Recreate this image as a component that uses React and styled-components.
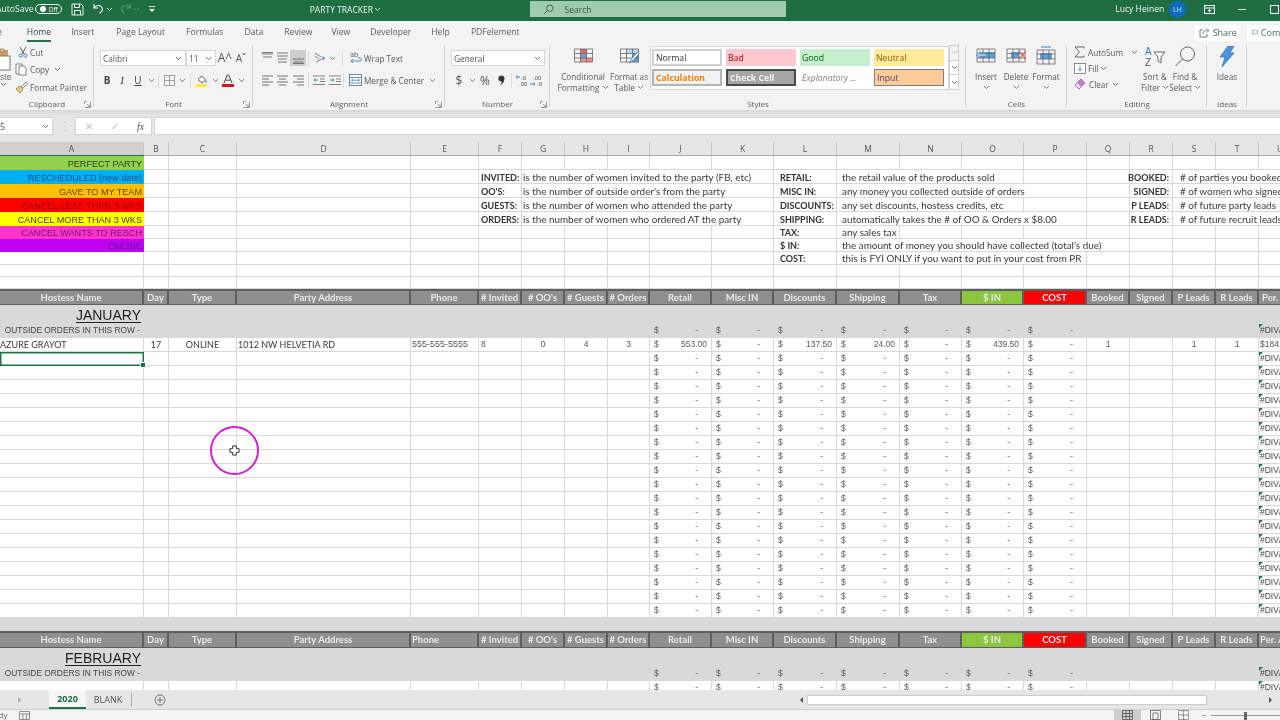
import React from 'react';
import styled, { createGlobalStyle } from 'styled-components';

const GlobalStyle = createGlobalStyle`
  html, body {
    margin: 0;
    padding: 0;
    height: 100%;
    background: #fff;
    overflow: hidden;
  }
  #root {
    height: 100%;
  }
`;

const UI_FONT = `'Open Sans', 'Noto Sans', sans-serif`;
const CELL_FONT = `Lato, 'Open Sans', sans-serif`;
const ARIAL = `'Liberation Sans', Arial, sans-serif`;

const COL_NAMES = 'ABCDEFGHIJKLMNOPQRSTU'.split('');
const COL_WIDTHS = [144, 25, 68, 174, 68, 43, 43, 43, 42, 62, 62, 63, 63, 62, 62, 63, 43, 43, 43, 43, 43];
const COL_TEMPLATE = COL_WIDTHS.map((w) => `${w}px`).join(' ');

/* ---------- icons ---------- */

const Chevron = ({ color = '#666' }) => (
  <svg width='7' height='5' viewBox='0 0 7 5'>
    <path d='M1 1l2.5 2.5L6 1' fill='none' stroke={color} strokeWidth='0.9' />
  </svg>
);

const SaveIcon = () => (
  <svg width='13' height='13' viewBox='0 0 13 13' fill='none' stroke='#e8f1ec' strokeWidth='1'>
    <path d='M1 1h9l2 2v9H1z' />
    <path d='M3.5 1v3.5h5V1M3.5 12V7.5h6V12' />
  </svg>
);

const UndoIcon = ({ color = '#fff' }) => (
  <svg width='13' height='12' viewBox='0 0 13 12' fill='none' stroke={color} strokeWidth='1.1'>
    <path d='M2 1v4h4' />
    <path d='M2 5c2-2.6 5-3 7-1.6 2.2 1.6 2 4.6-1.6 7' />
  </svg>
);

const RedoIcon = ({ color = '#5f9a7b' }) => (
  <svg width='13' height='12' viewBox='0 0 13 12' fill='none' stroke={color} strokeWidth='1.1'>
    <path d='M11 1v4H7' />
    <path d='M11 5C9 2.4 6 2 4 3.4c-2.2 1.6-2 4.6 1.6 7' />
  </svg>
);

const QuickAccessIcon = () => (
  <svg width='8' height='8' viewBox='0 0 8 8' fill='#eef5f0'>
    <rect x='1' y='1' width='6' height='1' />
    <path d='M1 4h6L4 7z' />
  </svg>
);

const SearchIcon = () => (
  <svg width='11' height='11' viewBox='0 0 11 11' fill='none' stroke='#33584a' strokeWidth='0.9'>
    <circle cx='6.8' cy='4.2' r='3.2' />
    <path d='M4.5 6.5L1 10' />
  </svg>
);

const RibbonModeIcon = () => (
  <svg width='11' height='9' viewBox='0 0 11 9' fill='none' stroke='#fff' strokeWidth='1'>
    <rect x='.5' y='.5' width='10' height='8' />
    <path d='M.5 3h10' />
    <path d='M5.5 4v3M4 5.5h3' />
  </svg>
);

const ShareIcon = () => (
  <svg width='11' height='11' viewBox='0 0 11 11' fill='none' stroke='#4e7b66' strokeWidth='0.9'>
    <path d='M4 3H1v7h7V7' />
    <path d='M4 7c0-2.5 2-3.6 4-3.6M7.5 1.5l2.5 2-2.5 2' />
  </svg>
);

const CommentIcon = () => (
  <svg width='11' height='11' viewBox='0 0 11 11' fill='none' stroke='#4e7b66' strokeWidth='0.9'>
    <path d='M1 1.5h9v6H4L2 9.5v-2H1z' />
  </svg>
);

const PasteIcon = () => (
  <svg width='13' height='24' viewBox='0 0 13 24' fill='none'>
    <path d='M-6 3h14v6H-6z' fill='#c9a063' />
    <rect x='-3' y='9' width='13' height='14' fill='#fff' stroke='#777' />
    <path d='M0 2h4v3H0z' fill='#e8c88e' stroke='#8a6d3b' strokeWidth='.6' />
  </svg>
);

const CutIcon = () => (
  <svg width='12' height='12' viewBox='0 0 12 12' fill='none' stroke='#555' strokeWidth='0.9'>
    <path d='M3 1l4 7M9 1L5 8' />
    <circle cx='3.6' cy='9.6' r='1.6' stroke='#3f77b5' />
    <circle cx='8.4' cy='9.6' r='1.6' stroke='#3f77b5' />
  </svg>
);

const CopyIcon = () => (
  <svg width='13' height='13' viewBox='0 0 13 13' fill='#fff' stroke='#666' strokeWidth='0.8'>
    <path d='M1 1h6v10H1z' />
    <path d='M4 3h5l2 2v7H4z' />
  </svg>
);

const PainterIcon = () => (
  <svg width='13' height='13' viewBox='0 0 13 13'>
    <path d='M6 6l5-5 1.5 1.5-5 5z' fill='#fff' stroke='#666' strokeWidth='0.8' />
    <path d='M1 8l4-3 3 3-3 4z' fill='#eccb7b' stroke='#8a6d3b' strokeWidth='0.7' />
  </svg>
);

const BordersIcon = () => (
  <svg width='11' height='11' viewBox='0 0 11 11' fill='none' stroke='#8d8d8d' strokeWidth='0.8'>
    <rect x='.5' y='.5' width='10' height='10' />
    <path d='M5.5 .5v10M.5 5.5h10' />
  </svg>
);

const FillIcon = () => (
  <svg width='12' height='13' viewBox='0 0 12 13'>
    <path d='M2 5.5L6 2l3.5 4-3.5 3z' fill='#fff' stroke='#555' strokeWidth='0.9' />
    <circle cx='10' cy='7.5' r='.9' fill='#3f77b5' />
    <rect y='10' width='11' height='3' fill='#ffef3a' />
  </svg>
);

const FontColorIcon = () => (
  <svg width='12' height='13' viewBox='0 0 12 13'>
    <path d='M2 9l3.2-8h1.4L10 9M3.4 6.2h5' fill='none' stroke='#444' strokeWidth='1' />
    <rect y='10' width='12' height='3' fill='#d6161c' />
  </svg>
);

const VAlignIcon = ({ pos }) => {
  const y = { top: [2, 5], middle: [4, 7], bottom: [7, 10] }[pos];
  return (
    <svg width='11' height='12' viewBox='0 0 11 12' stroke='#666' strokeWidth='0.9'>
      {pos === 'top' && <path d='M0 .5h11' />}
      {pos === 'bottom' && <path d='M0 11.5h11' />}
      <path d={`M0 ${y[0]}h11M1 ${y[1]}h9`} />
      {pos === 'middle' && <path d='M0 1h11M1 10h9' />}
    </svg>
  );
};

const HAlignIcon = ({ pos }) => {
  const paths = {
    left: 'M0 1h11M0 4h7M0 7h11M0 10h7',
    center: 'M0 1h11M2 4h7M0 7h11M2 10h7',
    right: 'M0 1h11M4 4h7M0 7h11M4 10h7',
  };
  return (
    <svg width='11' height='11' viewBox='0 0 11 11' stroke='#666' strokeWidth='0.9'>
      <path d={paths[pos]} />
    </svg>
  );
};

const OrientationIcon = () => (
  <svg width='13' height='12' viewBox='0 0 13 12' fill='none' strokeWidth='0.9'>
    <path d='M2 1l6 4M2 4l4 3' stroke='#666' />
    <path d='M3 10l8-4M9 4.5l2.4 1.4-1 2.2' stroke='#3f77b5' />
  </svg>
);

const IndentIcon = ({ flip }) => (
  <svg width='12' height='10' viewBox='0 0 12 10' fill='none' strokeWidth='0.9'>
    <path d='M0 1h12M7 4h5M7 6.5h5M0 9.5h12' stroke='#777' />
    <path d={flip ? 'M1 5h4M3.5 3.5L5 5 3.5 6.5' : 'M5 5H1M2.5 3.5L1 5l1.5 1.5'} stroke='#2f80c9' />
  </svg>
);

const WrapIcon = () => (
  <svg width='13' height='14' viewBox='0 0 13 14' fill='none'>
    <text x='0' y='6' fontSize='7' fill='#555' fontFamily={UI_FONT}>ab</text>
    <path d='M1 10h9c2 0 2-3 0-3H8M3 8l-2 2 2 2' stroke='#2f80c9' strokeWidth='0.9' />
  </svg>
);

const MergeIcon = () => (
  <svg width='13' height='12' viewBox='0 0 13 12' fill='#fff' stroke='#4f6d88' strokeWidth='0.8'>
    <rect x='.5' y='.5' width='12' height='11' />
    <path d='M.5 3.5h12M.5 9h12' />
    <path d='M2.5 6.2h8M4 4.8L2.5 6.2 4 7.6M9 4.8l1.5 1.4L9 7.6' stroke='#2f80c9' fill='none' />
  </svg>
);

const CommaIcon = () => (
  <svg width='7' height='11' viewBox='0 0 7 11' fill='#333'>
    <circle cx='3.4' cy='3.4' r='3' />
    <path d='M4 4l2.2-.4C6.4 6.6 5 9 2 10.4 3.6 8.6 4.2 6.6 4 4z' />
  </svg>
);

const DecimalIcon = ({ more }) => (
  <svg width='14' height='13' viewBox='0 0 14 13'>
    <text x={more ? 6 : 4} y='5.5' fontSize='6' fill='#555' fontFamily={ARIAL}>{more ? '.0' : '.00'}</text>
    <text x={more ? 4 : 8} y='12' fontSize='6' fill='#555' fontFamily={ARIAL}>{more ? '.00' : '.0'}</text>
    <path d={more ? 'M5 3H1M2.5 1.5L1 3l1.5 1.5' : 'M1 10h5M4.5 8.5L6 10l-1.5 1.5'} fill='none' stroke='#2f80c9' strokeWidth='0.9' />
  </svg>
);

const GridLines = () => (
  <path d='M1 3h18v13H1zM1 7.5h18M1 12h18M7 3v13M13 3v13' fill='none' stroke='#666' strokeWidth='0.8' />
);

const ConditionalIcon = () => (
  <svg width='21' height='18' viewBox='0 0 20 18'>
    <rect x='7' y='3' width='6' height='4.5' fill='#ee5f6a' />
    <rect x='7' y='7.5' width='6' height='4.5' fill='#6d9ed6' />
    <rect x='7' y='12' width='12' height='4' fill='#f08a90' />
    <GridLines />
  </svg>
);

const TableIcon = () => (
  <svg width='21' height='18' viewBox='0 0 20 18'>
    <rect x='7' y='3' width='12' height='4.5' fill='#bcd6ee' />
    <rect x='13' y='7.5' width='6' height='8.5' fill='#5da0e0' />
    <GridLines />
    <path d='M10 17l2-4 6-7 1.5 1.5-6 7z' fill='#fff' stroke='#4f6d88' strokeWidth='0.8' />
  </svg>
);

const InsertCellsIcon = () => (
  <svg width='22' height='18' viewBox='0 0 20 18'>
    <rect x='3' y='6' width='16' height='6' fill='#5da0e0' />
    <GridLines />
    <path d='M0 9l4-3.5V7.5h6v3H4v2z' fill='#9cc6ea' stroke='#4f89c2' strokeWidth='0.6' />
  </svg>
);

const DeleteCellsIcon = () => (
  <svg width='22' height='18' viewBox='0 0 20 18'>
    <rect x='5' y='6' width='8' height='6' fill='#5da0e0' />
    <GridLines />
    <path d='M13 5l7 8M20 5l-7 8' stroke='#e2483e' strokeWidth='1.1' />
  </svg>
);

const FormatCellsIcon = () => (
  <svg width='22' height='20' viewBox='0 0 20 20'>
    <rect x='4' y='7' width='12' height='6' fill='#5da0e0' />
    <path d='M5 1h10' stroke='#2f80c9' strokeWidth='1' />
    <path d='M1 4h18v14H1zM1 8h18M1 13h18M7 4v14M13 4v14' fill='none' stroke='#666' strokeWidth='0.8' />
  </svg>
);

const SumIcon = () => (
  <svg width='11' height='12' viewBox='0 0 11 12' fill='none' stroke='#555' strokeWidth='0.9'>
    <path d='M10 2.5V1H1l4.5 5L1 11h9V9.5' />
  </svg>
);

const FillDownIcon = () => (
  <svg width='12' height='11' viewBox='0 0 12 11' fill='#fff' stroke='#777' strokeWidth='0.8'>
    <rect x='.5' y='.5' width='11' height='10' />
    <path d='M6 2.5v5M4 5.6L6 8l2-2.4' stroke='#2f80c9' fill='none' />
  </svg>
);

const EraserIcon = () => (
  <svg width='12' height='12' viewBox='0 0 12 12'>
    <path d='M1 7l6-6 4 4-6 6z' fill='#c77bd0' stroke='#9b4aa8' strokeWidth='0.7' />
    <path d='M1 7l2.5-2.5 4 4L5 11z' fill='#f2dff5' stroke='#9b4aa8' strokeWidth='0.7' />
  </svg>
);

const SortFilterIcon = () => (
  <svg width='22' height='21' viewBox='0 0 22 21'>
    <text x='1' y='9' fontSize='10' fill='#2f80c9' fontFamily={ARIAL}>A</text>
    <text x='1' y='20' fontSize='10' fill='#555' fontFamily={ARIAL}>Z</text>
    <path d='M10 6h11l-4 5v6l-3-2v-4z' fill='#fff' stroke='#555' strokeWidth='0.9' />
  </svg>
);

const FindIcon = () => (
  <svg width='22' height='21' viewBox='0 0 22 21' fill='none' stroke='#555' strokeWidth='0.9'>
    <circle cx='13.5' cy='8' r='7' />
    <path d='M8.5 13L1.5 20' />
  </svg>
);

const BoltIcon = () => (
  <svg width='16' height='21' viewBox='0 0 16 21'>
    <path d='M9 0h6l-4 7h4L3 21l3-10H1z' fill='#4f94dc' stroke='#2f6fb5' strokeWidth='0.7' />
  </svg>
);

const LauncherIcon = () => (
  <svg width='7' height='7' viewBox='0 0 7 7' fill='none' stroke='#888' strokeWidth='0.8'>
    <path d='M.5 3V.5H3M.5 6.5h6v-6M3 3l3 3M3.6 6h2.4V3.6' />
  </svg>
);

const DotsIcon = () => (
  <svg width='3' height='9' viewBox='0 0 3 9' fill='#bbb'>
    <rect x='1' y='0' width='1' height='1' />
    <rect x='1' y='4' width='1' height='1' />
    <rect x='1' y='8' width='1' height='1' />
  </svg>
);

const PlusCircleIcon = () => (
  <svg width='12' height='12' viewBox='0 0 12 12' fill='none' stroke='#666' strokeWidth='0.9'>
    <circle cx='6' cy='6' r='5' />
    <path d='M6 3v6M3 6h6' />
  </svg>
);

const MacroIcon = () => (
  <svg width='11' height='9' viewBox='0 0 11 9' fill='none' stroke='#777' strokeWidth='0.8'>
    <path d='M.5 .5h10v8h-10zM.5 3h10M4 3v5.5M7.5 3v5.5' />
  </svg>
);

const NormalViewIcon = () => (
  <svg width='11' height='10' viewBox='0 0 11 10' fill='none' stroke='#555' strokeWidth='0.8'>
    <path d='M.5 .5h10v9h-10zM.5 3.5h10M.5 6.5h10M4 .5v9M7.5 .5v9' />
  </svg>
);

const PageViewIcon = () => (
  <svg width='11' height='10' viewBox='0 0 11 10' fill='none' stroke='#666' strokeWidth='0.8'>
    <path d='M.5 .5h10v9h-10zM3 3h5v6.5H3z' />
  </svg>
);

const BreakViewIcon = () => (
  <svg width='11' height='10' viewBox='0 0 11 10' fill='none' stroke='#666' strokeWidth='0.8'>
    <path d='M.5 .5h10v9h-10zM.5 5h10M5.5 .5v9' strokeDasharray='2 0.5' />
  </svg>
);

const CursorIcon = () => (
  <svg width='11' height='11' viewBox='0 0 12 12'>
    <path d='M4 1h4v3h3v4H8v3H4V8H1V4h3z' fill='#fff' stroke='#222' strokeWidth='1' />
  </svg>
);

/* ---------- window chrome ---------- */

const Page = styled.div`
  width: 1280px;
  height: 720px;
  display: flex;
  flex-direction: column;
  overflow: hidden;
  position: relative;
  background: #fff;
  font-family: ${UI_FONT};
  filter: blur(0.35px);
`;

const TitleBar = styled.header`
  flex: 0 0 21px;
  box-sizing: border-box;
  padding-bottom: 3px;
  background: #1f6e43;
  color: #fff;
  display: flex;
  align-items: center;
  font-size: 9px;
  position: relative;
  overflow: hidden;
`;

const AutoSave = styled.span`
  margin-left: -4px;
  width: 39px;
  font-size: 8.6px;
  color: #e9f2ed;
`;

const Toggle = styled.span`
  width: 27px;
  height: 10px;
  border: 1px solid #fff;
  border-radius: 6px;
  display: flex;
  align-items: center;
  justify-content: flex-end;
  gap: 2px;
  padding-right: 3px;
  box-sizing: border-box;
  font-size: 6.5px;
  position: relative;
  &::before {
    content: '';
    width: 6px;
    height: 6px;
    border-radius: 50%;
    background: #fff;
  }
`;

const QuickSlot = styled.span`
  display: inline-flex;
  align-items: center;
  justify-content: center;
  width: ${({ $w }) => $w}px;
  margin-left: ${({ $ml }) => $ml || 0}px;
`;

const DocTitle = styled.span`
  margin-left: 154px;
  width: 64px;
  white-space: nowrap;
  font-size: 8.5px;
  color: #f1f6f3;
`;

const SearchBox = styled.div`
  margin-left: 149px;
  width: 257px;
  height: 16px;
  background: #9fcbb0;
  display: flex;
  align-items: center;
  gap: 11px;
  padding-left: 13px;
  box-sizing: border-box;
  color: #2f5d48;
  font-size: 8.5px;
`;

const UserName = styled.span`
  margin-left: 329px;
  width: 54px;
  white-space: nowrap;
  font-size: 8.6px;
  color: #eef5f1;
`;

const Avatar = styled.span`
  width: 17px;
  height: 17px;
  border-radius: 50%;
  background: #0f6cbd;
  color: #cfe4f7;
  font-size: 7px;
  display: flex;
  align-items: center;
  justify-content: center;
`;

const WindowBtn = styled.span`
  display: inline-flex;
  align-items: center;
  justify-content: center;
  width: ${({ $w }) => $w}px;
  margin-left: ${({ $ml }) => $ml || 0}px;
`;

const MinimizeGlyph = styled.span`
  width: 8px;
  height: 1px;
  background: #d8e8df;
`;

const RestoreGlyph = styled.span`
  width: 7px;
  height: 7px;
  border: 1px solid #fff;
`;

const TabBar = styled.nav`
  flex: 0 0 23px;
  background: #f3f3f3;
  display: flex;
  align-items: center;
  font-size: 8.6px;
  color: #555;
  position: relative;
`;

const Tab = styled.span`
  margin-left: ${({ $ml }) => $ml}px;
  white-space: nowrap;
  line-height: 16px;
  color: ${({ $active }) => ($active ? '#2b4d3c' : '#5c5c5c')};
  border-bottom: 2px solid ${({ $active }) => ($active ? '#217346' : 'transparent')};
`;

const ShareButton = styled.span`
  margin-left: ${({ $ml }) => $ml}px;
  width: ${({ $w }) => $w}px;
  height: 16px;
  flex: none;
  background: #fff;
  color: #3e6e58;
  font-size: 9px;
  display: flex;
  align-items: center;
  gap: 3px;
  padding-left: 5px;
  box-sizing: border-box;
  overflow: hidden;
  white-space: nowrap;
`;

/* ---------- ribbon ---------- */

const Ribbon = styled.section`
  flex: 0 0 66px;
  background: #f3f3f3;
  display: flex;
  color: #5a5a5a;
  font-size: 8.2px;
`;

const Group = styled.div`
  flex: 0 0 ${({ $w }) => $w}px;
  box-sizing: border-box;
  display: flex;
  flex-direction: column;
  position: relative;
  &::after {
    content: '';
    position: absolute;
    right: 0;
    top: 1px;
    bottom: 3px;
    width: 1px;
    background: #d2d2d2;
  }
`;

const GroupBody = styled.div`
  flex: 1;
  min-height: 0;
  display: flex;
  padding-left: ${({ $pl }) => $pl || 0}px;
`;

const GroupLabel = styled.div`
  height: 12px;
  line-height: 12px;
  text-align: center;
  font-size: 8px;
  color: #5e5e5e;
`;

const Launcher = styled.span`
  position: absolute;
  right: 3px;
  bottom: 2px;
  display: flex;
`;

const Stack = styled.div`
  flex: none;
  width: ${({ $w }) => ($w ? `${$w}px` : 'auto')};
  display: flex;
  flex-direction: column;
  gap: ${({ $gap }) => $gap ?? 6}px;
  padding-top: ${({ $pt }) => $pt ?? 6}px;
`;

const ToolRow = styled.div`
  display: flex;
  align-items: center;
  height: ${({ $h }) => $h || 16}px;
`;

const Tool = styled.span`
  flex: none;
  width: ${({ $w }) => $w || 16}px;
  height: 16px;
  display: inline-flex;
  align-items: center;
  justify-content: center;
  background: ${({ $active }) => ($active ? '#cdcdcd' : 'transparent')};
  color: #444;
`;

const ToolSep = styled.span`
  flex: none;
  width: 1px;
  height: 15px;
  background: #dcdcdc;
  margin: 0 ${({ $m }) => $m ?? 3}px;
`;

const LabeledTool = styled.span`
  display: inline-flex;
  align-items: center;
  gap: ${({ $gap }) => $gap ?? 3}px;
  white-space: nowrap;
  margin-left: ${({ $ml }) => $ml || 0}px;
  color: #5a5a5a;
`;

const Combo = styled.span`
  flex: none;
  width: ${({ $w }) => $w}px;
  height: 16px;
  box-sizing: border-box;
  background: #fff;
  border: 1px solid #d6d6d6;
  display: flex;
  align-items: center;
  justify-content: space-between;
  padding: 0 3px 0 2px;
  font-size: 8.3px;
  color: #555;
`;

const GlyphA = styled.span`
  font-family: ${UI_FONT};
  font-size: ${({ $size }) => $size}px;
  color: #555;
  line-height: 1;
`;

const StyleB = styled.span`
  font-weight: 700;
  font-size: 10px;
`;

const StyleI = styled.span`
  font-family: 'Liberation Serif', serif;
  font-style: italic;
  font-size: 11px;
`;

const StyleU = styled.span`
  text-decoration: underline;
  font-size: 10px;
`;

const NumberGlyph = styled.span`
  font-size: ${({ $size }) => $size || 12}px;
  color: #555;
`;

const BigButton = styled.div`
  flex: none;
  width: ${({ $w }) => $w}px;
  display: flex;
  flex-direction: column;
  align-items: center;
  padding-top: 2px;
  line-height: 11px;
  white-space: nowrap;
  color: #5a5a5a;
`;

const BigIconSlot = styled.span`
  height: 25px;
  display: flex;
  align-items: flex-start;
  justify-content: center;
`;

const BigLabel = styled.span`
  display: inline-flex;
  align-items: center;
  gap: 2px;
  height: 11px;
`;

const PasteColumn = styled.div`
  flex: none;
  width: 15px;
  display: flex;
  flex-direction: column;
  padding-top: 3px;
  line-height: 11px;
  font-size: 8.2px;
`;

const ClipStack = styled.div`
  display: flex;
  flex-direction: column;
  gap: 1.5px;
`;

const ClipRow = styled.div`
  height: 16px;
  display: flex;
  align-items: center;
`;

const Gallery = styled.div`
  flex: none;
  width: 299px;
  height: 44px;
  margin-top: 2px;
  box-sizing: border-box;
  background: #fff;
  border: 1px solid #d4d4d4;
  display: grid;
  grid-template-columns: repeat(4, 70px);
  grid-auto-rows: 17px;
  gap: 3px 4px;
  padding: 2px 1px;
`;

const GalleryScroll = styled.div`
  flex: none;
  width: 10px;
  margin-top: 2px;
  height: 44px;
  display: flex;
  flex-direction: column;
`;

const ScrollBtn = styled.span`
  flex: 1;
  box-sizing: border-box;
  border: 1px solid #cfcfcf;
  background: ${({ $dim }) => ($dim ? '#f3f3f3' : '#fff')};
  display: flex;
  align-items: center;
  justify-content: center;
  margin-top: -1px;
`;

const CellStyle = styled.span`
  box-sizing: border-box;
  display: flex;
  align-items: center;
  padding-left: 2px;
  font-size: 8.7px;
  white-space: nowrap;
  overflow: hidden;
  background: ${({ $bg }) => $bg};
  color: ${({ $fg }) => $fg};
  font-weight: ${({ $bold }) => ($bold ? 700 : 400)};
  font-style: ${({ $italic }) => ($italic ? 'italic' : 'normal')};
  border: ${({ $border }) => $border || '0'};
`;

const RibbonShadow = styled.div`
  flex: 0 0 7px;
  background: linear-gradient(#d8d8d8, #e6e6e6);
`;

/* ---------- formula bar ---------- */

const FormulaBar = styled.div`
  flex: 0 0 18px;
  background: #e6e6e6;
  display: flex;
  align-items: stretch;
  font-size: 9px;
  color: #555;
`;

const NameBox = styled.div`
  width: 53px;
  background: #fff;
  border: solid #d4d4d4;
  border-width: 1px 1px 1px 0;
  box-sizing: border-box;
  display: flex;
  align-items: center;
  justify-content: space-between;
  padding-right: 3px;
`;

const FormulaDots = styled.div`
  width: 22px;
  display: flex;
  align-items: center;
  justify-content: center;
`;

const FormulaActions = styled.div`
  width: 77px;
  background: #fff;
  border: 1px solid #d4d4d4;
  box-sizing: border-box;
  display: flex;
  align-items: center;
  gap: 18px;
  padding-left: 9px;
  color: #bdbdbd;
  font-size: 10px;
`;

const FxLabel = styled.span`
  font-family: 'Liberation Serif', serif;
  font-style: italic;
  color: #555;
`;

const FormulaInput = styled.div`
  flex: 1;
  margin-left: 2px;
  background: #fff;
  border: solid #d4d4d4;
  border-width: 1px 0 1px 1px;
`;

const FormulaGap = styled.div`
  flex: 0 0 7px;
  background: #e6e6e6;
`;

/* ---------- sheet ---------- */

const ColumnHeaders = styled.div`
  flex: 0 0 13px;
  display: grid;
  grid-template-columns: ${COL_TEMPLATE};
  width: 1301px;
  background: #e6e6e6;
  border-bottom: 1px solid #a9a9a9;
  box-sizing: border-box;
`;

const ColumnHeader = styled.div`
  box-sizing: border-box;
  border-right: 1px solid #c6c6c6;
  text-align: center;
  font-size: 8.5px;
  line-height: 13px;
  color: #555;
  background: ${({ $active }) => ($active ? '#cfcfcf' : 'transparent')};
  box-shadow: ${({ $active }) => ($active ? '0 1px 0 #217346' : 'none')};
`;

const Sheet = styled.main`
  flex: 1;
  min-height: 0;
  overflow: hidden;
  width: 1301px;
  font-family: ${CELL_FONT};
`;

const Row = styled.div`
  --grid: ${({ $band }) => ($band ? 'transparent' : '#d8d8d8')};
  display: grid;
  grid-template-columns: ${COL_TEMPLATE};
  height: ${({ $h }) => $h || 14}px;
  background: ${({ $band }) => ($band ? '#d9d9d9' : '#fff')};
`;

const Cell = styled.div`
  box-sizing: border-box;
  grid-column: span ${({ $span }) => $span || 1};
  min-width: 0;
  white-space: nowrap;
  border-right: 1px solid var(--grid);
  border-bottom: 1px solid var(--grid);
  display: flex;
  align-items: center;
  position: relative;
  justify-content: ${({ $align }) => $align || 'flex-start'};
  padding: ${({ $pt }) => $pt || 0}px ${({ $pr }) => $pr ?? 2}px 0 ${({ $pl }) => $pl ?? 2}px;
  font-size: 9px;
  color: #3a3a3a;
`;

const NoteText = styled(Cell)`
  font-size: 9.9px;
`;

const LegendCell = styled(Cell)`
  background: ${({ $bg }) => $bg};
  color: ${({ $fg }) => $fg};
  font-family: ${ARIAL};
  font-size: 9.1px;
  border-bottom: 0;
  border-right: 0;
  justify-content: flex-end;
  padding-right: 2px;
`;

const NoteLabel = styled(Cell)`
  font-weight: 700;
  font-size: 9px;
  color: #333;
`;

const RightNoteLabel = styled(NoteLabel)`
  justify-content: flex-end;
`;

const NumberCell = styled(Cell)`
  font-family: ${ARIAL};
  font-size: ${({ $size }) => $size || 8.5}px;
  color: #555;
  padding-bottom: 1px;
`;

const Accounting = styled(Cell)`
  justify-content: space-between;
  font-family: ${ARIAL};
  font-size: 8.5px;
  color: #5a5a5a;
  padding: 0 4px 1px 4px;
`;

const DashValue = styled.span`
  padding-right: 9px;
`;

const ErrorCell = styled(Cell)`
  font-family: ${ARIAL};
  font-size: 8.5px;
  color: #444;
  overflow: hidden;
  padding: 0 0 1px 1px;
  &::before {
    content: '';
    position: absolute;
    left: 0;
    top: 0;
    border-style: solid;
    border-width: 4px 4px 0 0;
    border-color: #1f7a3d transparent transparent transparent;
  }
`;

const SelectedCell = styled(Cell)`
  overflow: visible;
  border: 0;
  box-shadow: inset 0 0 0 1.5px #217346;
  &::after {
    content: '';
    position: absolute;
    right: -2px;
    bottom: -2px;
    width: 4px;
    height: 4px;
    background: #217346;
    border: 1px solid #fff;
    box-sizing: content-box;
    z-index: 2;
  }
`;

const HeaderRow = styled.div`
  display: grid;
  grid-template-columns: ${COL_TEMPLATE};
  height: ${({ $h }) => $h}px;
  background: #5e5e5e;
  box-sizing: border-box;
  padding: 2px 0 1px;
`;

const HeaderCell = styled.div`
  background: ${({ $bg }) => $bg || '#8f8f8f'};
  color: #e9e9e9;
  font-weight: 700;
  font-size: 9.5px;
  display: flex;
  align-items: center;
  justify-content: ${({ $left }) => ($left ? 'flex-start' : 'center')};
  padding: 0 0 1px ${({ $pad }) => $pad || 0}px;
  margin-right: 2px;
  white-space: nowrap;
  overflow: hidden;
`;

const MonthTitle = styled(Cell)`
  font-family: ${ARIAL};
  font-size: 14px;
  color: #222;
  justify-content: flex-end;
  padding: 1px 2px 0 0;
  text-decoration: underline;
  text-underline-offset: 2px;
`;

const OutsideLabel = styled(Cell)`
  font-family: ${ARIAL};
  font-size: 8.4px;
  color: #444;
  justify-content: flex-end;
  padding: 0 3px 1px 0;
`;

const ClickRing = styled.div`
  position: absolute;
  left: 210px;
  top: 426px;
  width: 49px;
  height: 49px;
  box-sizing: border-box;
  border: 2px solid #d41fd4;
  border-radius: 50%;
  display: flex;
  align-items: center;
  justify-content: center;
`;

/* ---------- bottom bars ---------- */

const SheetTabs = styled.footer`
  flex: 0 0 20px;
  background: #e6e6e6;
  display: flex;
  align-items: center;
  font-size: 9px;
  position: relative;
  z-index: 1;
  border-bottom: 1px solid #cfcfcf;
  box-sizing: border-box;
`;

const SheetTab = styled.span`
  height: 100%;
  box-sizing: border-box;
  display: flex;
  align-items: center;
  justify-content: center;
  width: ${({ $w }) => $w}px;
  margin-left: ${({ $ml }) => $ml || 0}px;
  color: ${({ $active }) => ($active ? '#1d6a40' : '#555')};
  font-weight: ${({ $active }) => ($active ? 700 : 400)};
  background: ${({ $active }) => ($active ? '#f6f6f6' : 'transparent')};
  border-bottom: ${({ $active }) => ($active ? '2px solid #217346' : '0')};
`;

const TabDivider = styled.span`
  width: 1px;
  height: 13px;
  background: #aaa;
  margin-left: 1px;
`;

const AddSheet = styled.span`
  margin-left: 22px;
  display: flex;
`;

const ScrollArrow = styled.span`
  flex: none;
  width: 0;
  height: 0;
  margin-left: ${({ $ml }) => $ml}px;
  border-style: solid;
  border-width: 3px ${({ $right }) => ($right ? 0 : '3px')} 3px ${({ $right }) => ($right ? '3px' : 0)};
  border-color: transparent ${({ $right, $c }) => ($right ? 'transparent' : $c || '#555')} transparent ${({ $right, $c }) => ($right ? $c || '#555' : 'transparent')};
`;

const HScrollTrack = styled.span`
  flex: none;
  margin-left: 4px;
  width: 400px;
  height: 10px;
  background: #fff;
  border: 1px solid #cdcdcd;
  box-sizing: border-box;
`;

const StatusBar = styled.div`
  flex: 0 0 10px;
  background: #f3f3f3;
  display: flex;
  align-items: flex-start;
  font-size: 8px;
  line-height: 12px;
  color: #666;
  overflow: hidden;
`;

const StatusSlot = styled.span`
  flex: none;
  width: ${({ $w }) => $w}px;
  height: 10px;
  margin-left: ${({ $ml }) => $ml || 0}px;
  display: flex;
  align-items: center;
  justify-content: center;
  background: ${({ $active }) => ($active ? '#cdcdcd' : 'transparent')};
`;

const ZoomTrack = styled.span`
  flex: none;
  margin-left: 4px;
  width: 70px;
  height: 10px;
  position: relative;
  &::before {
    content: '';
    position: absolute;
    left: 0;
    right: 0;
    top: 5px;
    height: 1px;
    background: #999;
  }
  &::after {
    content: '';
    position: absolute;
    left: 33px;
    top: 2px;
    width: 3px;
    height: 8px;
    background: #666;
  }
`;

/* ---------- data ---------- */

const TABS = [
  ['e', -3],
  ['Home', 25, true],
  ['Insert', 20],
  ['Page Layout', 22],
  ['Formulas', 21],
  ['Data', 21],
  ['Review', 21],
  ['View', 19],
  ['Developer', 20],
  ['Help', 20],
  ['PDFelement', 21],
];

const GALLERY = [
  { label: 'Normal', $bg: '#fff', $fg: '#333', $border: '2px solid #d0d0d0' },
  { label: 'Bad', $bg: '#ffc7ce', $fg: '#9c0006' },
  { label: 'Good', $bg: '#c6efce', $fg: '#006100' },
  { label: 'Neutral', $bg: '#ffeb9c', $fg: '#9c5700' },
  { label: 'Calculation', $bg: '#f2f2f2', $fg: '#fa7d00', $bold: true, $border: '2px solid #b4b4b4' },
  { label: 'Check Cell', $bg: '#a5a5a5', $fg: '#f2f2f2', $bold: true, $border: '2px solid #4a4a4a' },
  { label: 'Explanatory ...', $bg: '#fff', $fg: '#7f7f7f', $italic: true },
  { label: 'Input', $bg: '#ffcc99', $fg: '#3f3f76', $border: '1px solid #7f7f7f' },
];

const TOP_ROWS = [
  { h: 14, legend: ['PERFECT PARTY', '#92d050', '#234a12'] },
  {
    h: 14,
    legend: ['RESCHEDULED (new date)', '#00b0f0', '#0b4f8f'],
    f: ['INVITED:', 'is the number of women invited to the party (FB, etc)'],
    l: ['RETAIL:', 'the retail value of the products sold', 3],
    r: ['BOOKED:', '# of parties you booked'],
  },
  {
    h: 14,
    legend: ['GAVE TO MY TEAM', '#ffc000', '#5f4500'],
    f: ["OO'S:", "is the number of outside order's from the party"],
    l: ['MISC IN:', 'any money you collected outside of orders', 4],
    r: ['SIGNED:', '# of women  who signed'],
  },
  {
    h: 14,
    legend: ['CANCEL LESS THAN 3 WKS', '#ff0000', '#8f0c0c'],
    f: ['GUESTS:', 'is the number of women who attended the party'],
    l: ['DISCOUNTS:', 'any set discounts, hostess credits, etc', 3],
    r: ['P LEADS:', '# of future party leads'],
  },
  {
    h: 14,
    legend: ['CANCEL MORE THAN 3 WKS', '#ffff00', '#45450a'],
    f: ['ORDERS:', 'is the number of women who ordered AT the party'],
    l: ['SHIPPING:', 'automatically takes the # of OO & Orders x $8.00', 4],
    r: ['R LEADS:', '# of future recruit leads'],
  },
  {
    h: 13,
    legend: ['CANCEL WANTS TO RESCH', '#ff33cc', '#721567'],
    l: ['TAX:', 'any sales tax', 1],
  },
  {
    h: 13,
    legend: ['ONLINE', '#c000f0', '#5e1a9a'],
    l: ['$ IN:', "the amount of money you should have collected (total's due)", 5],
  },
  { h: 12, l: ['COST:', 'this is FYI ONLY if you want to put in your cost from PR', 4] },
  { h: 13 },
  { h: 12 },
];

const HEADERS = [
  'Hostess Name', 'Day', 'Type', 'Party Address', 'Phone', '# Invited', "# OO's", '# Guests', '# Orders',
  'Retail', 'Misc IN', 'Discounts', 'Shipping', 'Tax', '$ IN', 'COST', 'Booked', 'Signed', 'P Leads', 'R Leads', 'Per. A',
];

const blanks = (n, key) => Array.from({ length: n }, (_, i) => <Cell key={`${key}-${i}`} />);

const Acct = ({ value }) => (
  <Accounting>
    <span>$</span>
    {value ? <span>{value}</span> : <DashValue>-</DashValue>}
  </Accounting>
);

const AcctRun = ({ values = [] }) =>
  Array.from({ length: 7 }, (_, i) => <Acct key={i} value={values[i]} />);

const TopRow = ({ row }) => {
  const pt = row.h >= 14 ? 1 : 0;
  return (
    <Row $h={row.h}>
      {row.legend ? (
        <LegendCell $bg={row.legend[1]} $fg={row.legend[2]} $pt={pt}>{row.legend[0]}</LegendCell>
      ) : (
        <Cell />
      )}
      {blanks(4, 'lead')}
      {row.f ? (
        <>
          <NoteLabel $pt={pt}>{row.f[0]}</NoteLabel>
          <NoteText $span={5} $pl={1} $pt={pt}>{row.f[1]}</NoteText>
        </>
      ) : (
        blanks(6, 'f')
      )}
      {row.l ? (
        <>
          <NoteLabel $pl={6} $pt={pt}>{row.l[0]}</NoteLabel>
          <NoteText $span={row.l[2]} $pl={5} $pt={pt}>{row.l[1]}</NoteText>
          {blanks(5 - row.l[2], 'l')}
        </>
      ) : (
        blanks(6, 'l')
      )}
      {row.r ? (
        <>
          <RightNoteLabel $pr={3} $pt={pt}>{row.r[0]}</RightNoteLabel>
          <NoteText $span={3} $pl={7} $pt={pt}>{row.r[1]}</NoteText>
        </>
      ) : (
        blanks(4, 'r')
      )}
    </Row>
  );
};

const TableHeader = ({ h, second }) => (
  <HeaderRow $h={h}>
    {HEADERS.map((label) => {
      const isPer = label === 'Per. A';
      const isLeft = isPer || (second && label === 'Phone');
      return (
        <HeaderCell
          key={label}
          $left={isLeft}
          $pad={isLeft ? (second ? 1 : 3) : 0}
          $bg={label === '$ IN' ? '#8cc63f' : label === 'COST' ? '#ff0000' : undefined}
        >
          {label}
        </HeaderCell>
      );
    })}
  </HeaderRow>
);

const MonthRows = ({ month }) => (
  <>
    <Row $band $h={19}>
      <MonthTitle>{month}</MonthTitle>
      {blanks(20, 'm')}
    </Row>
    <Row $band>
      <OutsideLabel>OUTSIDE ORDERS IN THIS ROW -</OutsideLabel>
      {blanks(8, 'o')}
      <AcctRun />
      {blanks(4, 'o2')}
      <ErrorCell>#DIV/0!</ErrorCell>
    </Row>
  </>
);

const EmptyDataRow = () => (
  <Row>
    {blanks(9, 'e')}
    <AcctRun />
    {blanks(4, 'e2')}
    <ErrorCell>#DIV/0!</ErrorCell>
  </Row>
);

const App = () => (
  <Page>
    <GlobalStyle />
    <TitleBar>
      <AutoSave>AutoSave</AutoSave>
      <Toggle>Off</Toggle>
      <QuickSlot $w={14} $ml={9}><SaveIcon /></QuickSlot>
      <QuickSlot $w={14} $ml={7}><UndoIcon /></QuickSlot>
      <QuickSlot $w={8}><Chevron color='#e7f1eb' /></QuickSlot>
      <QuickSlot $w={14} $ml={5}><RedoIcon /></QuickSlot>
      <QuickSlot $w={8}><Chevron color='#5f9a7b' /></QuickSlot>
      <QuickSlot $w={8} $ml={7}><QuickAccessIcon /></QuickSlot>
      <DocTitle>PARTY TRACKER</DocTitle>
      <Chevron color='#e7f1eb' />
      <SearchBox><SearchIcon />Search</SearchBox>
      <UserName>Lucy Heinen</UserName>
      <Avatar>LH</Avatar>
      <WindowBtn $w={11} $ml={18}><RibbonModeIcon /></WindowBtn>
      <WindowBtn $w={10} $ml={22}><MinimizeGlyph /></WindowBtn>
      <WindowBtn $w={10} $ml={23}><RestoreGlyph /></WindowBtn>
    </TitleBar>

    <TabBar>
      {TABS.map(([label, ml, active]) => (
        <Tab key={label} $ml={ml} $active={active}>{label}</Tab>
      ))}
      <ShareButton $ml={674} $w={46}><ShareIcon />Share</ShareButton>
      <ShareButton $ml={7} $w={60}><CommentIcon />Comments</ShareButton>
    </TabBar>

    <Ribbon>
      <Group $w={94}>
        <GroupBody>
          <PasteColumn>
            <PasteIcon />
            <span>ste</span>
            <Chevron />
          </PasteColumn>
          <ClipStack>
            <ClipRow><LabeledTool $gap={1} $ml={2}><CutIcon />Cut</LabeledTool></ClipRow>
            <ClipRow><LabeledTool $gap={2}><CopyIcon />Copy<Tool $w={12}><Chevron /></Tool></LabeledTool></ClipRow>
            <ClipRow><LabeledTool $gap={2}><PainterIcon />Format Painter</LabeledTool></ClipRow>
          </ClipStack>
        </GroupBody>
        <GroupLabel>Clipboard</GroupLabel>
        <Launcher><LauncherIcon /></Launcher>
      </Group>

      <Group $w={159}>
        <GroupBody $pl={6}>
          <Stack>
            <ToolRow>
              <Combo $w={86}>Calibri<Chevron /></Combo>
              <Combo $w={30}>11<Chevron /></Combo>
              <Tool $w={18}><GlyphA $size={12}>A^</GlyphA></Tool>
              <Tool $w={14}><GlyphA $size={10}>Aˇ</GlyphA></Tool>
            </ToolRow>
            <ToolRow>
              <Tool $w={14}><StyleB>B</StyleB></Tool>
              <Tool><StyleI>I</StyleI></Tool>
              <Tool><StyleU>U</StyleU></Tool>
              <Tool $w={10}><Chevron /></Tool>
              <ToolSep $m={2} />
              <Tool><BordersIcon /></Tool>
              <Tool $w={10}><Chevron /></Tool>
              <ToolSep $m={3} />
              <Tool><FillIcon /></Tool>
              <Tool $w={10}><Chevron /></Tool>
              <Tool><FontColorIcon /></Tool>
              <Tool $w={10}><Chevron /></Tool>
            </ToolRow>
          </Stack>
        </GroupBody>
        <GroupLabel>Font</GroupLabel>
        <Launcher><LauncherIcon /></Launcher>
      </Group>

      <Group $w={192}>
        <GroupBody $pl={6}>
          <Stack>
            <ToolRow>
              <Tool><VAlignIcon pos='top' /></Tool>
              <Tool $w={15}><VAlignIcon pos='middle' /></Tool>
              <Tool $active><VAlignIcon pos='bottom' /></Tool>
              <ToolSep $m={2} />
              <Tool $w={16}><OrientationIcon /></Tool>
              <Tool $w={10}><Chevron /></Tool>
              <ToolSep $m={5} />
              <LabeledTool $gap={1} $ml={2}><WrapIcon />Wrap Text</LabeledTool>
            </ToolRow>
            <ToolRow>
              <Tool><HAlignIcon pos='left' /></Tool>
              <Tool $w={15}><HAlignIcon pos='center' /></Tool>
              <Tool><HAlignIcon pos='right' /></Tool>
              <ToolSep $m={2} />
              <Tool><IndentIcon /></Tool>
              <Tool $w={15}><IndentIcon flip /></Tool>
              <ToolSep $m={1} />
              <LabeledTool $gap={2} $ml={4}><MergeIcon />Merge &amp; Center<Tool $w={12}><Chevron /></Tool></LabeledTool>
            </ToolRow>
          </Stack>
        </GroupBody>
        <GroupLabel>Alignment</GroupLabel>
        <Launcher><LauncherIcon /></Launcher>
      </Group>

      <Group $w={105}>
        <GroupBody $pl={6}>
          <Stack>
            <ToolRow><Combo $w={94}>General<Chevron /></Combo></ToolRow>
            <ToolRow>
              <Tool><NumberGlyph $size={12}>$</NumberGlyph></Tool>
              <Tool $w={10}><Chevron /></Tool>
              <Tool><NumberGlyph $size={12}>%</NumberGlyph></Tool>
              <Tool><CommaIcon /></Tool>
              <ToolSep $m={2} />
              <Tool $w={15}><DecimalIcon more /></Tool>
              <Tool $w={14}><DecimalIcon /></Tool>
            </ToolRow>
          </Stack>
        </GroupBody>
        <GroupLabel>Number</GroupLabel>
        <Launcher><LauncherIcon /></Launcher>
      </Group>

      <Group $w={416}>
        <GroupBody $pl={8}>
          <BigButton $w={50}>
            <BigIconSlot><ConditionalIcon /></BigIconSlot>
            <BigLabel>Conditional</BigLabel>
            <BigLabel>Formatting<Chevron /></BigLabel>
          </BigButton>
          <BigButton $w={42}>
            <BigIconSlot><TableIcon /></BigIconSlot>
            <BigLabel>Format as</BigLabel>
            <BigLabel>Table<Chevron /></BigLabel>
          </BigButton>
          <Gallery>
            {GALLERY.map(({ label, ...look }) => (
              <CellStyle key={label} {...look}>{label}</CellStyle>
            ))}
          </Gallery>
          <GalleryScroll>
            <ScrollBtn $dim><Chevron color='#bbb' /></ScrollBtn>
            <ScrollBtn><Chevron /></ScrollBtn>
            <ScrollBtn><Chevron /></ScrollBtn>
          </GalleryScroll>
        </GroupBody>
        <GroupLabel>Styles</GroupLabel>
      </Group>

      <Group $w={101}>
        <GroupBody $pl={5}>
          <BigButton $w={30}>
            <BigIconSlot><InsertCellsIcon /></BigIconSlot>
            <BigLabel>Insert</BigLabel>
            <BigLabel><Chevron /></BigLabel>
          </BigButton>
          <BigButton $w={30}>
            <BigIconSlot><DeleteCellsIcon /></BigIconSlot>
            <BigLabel>Delete</BigLabel>
            <BigLabel><Chevron /></BigLabel>
          </BigButton>
          <BigButton $w={30}>
            <BigIconSlot><FormatCellsIcon /></BigIconSlot>
            <BigLabel>Format</BigLabel>
            <BigLabel><Chevron /></BigLabel>
          </BigButton>
        </GroupBody>
        <GroupLabel>Cells</GroupLabel>
      </Group>

      <Group $w={140}>
        <GroupBody $pl={7}>
          <Stack $pt={0} $gap={0} $w={66}>
            <ToolRow><LabeledTool $gap={3}><SumIcon />AutoSum<Tool $w={16}><Chevron /></Tool></LabeledTool></ToolRow>
            <ToolRow><LabeledTool $gap={2}><FillDownIcon />Fill<Chevron /></LabeledTool></ToolRow>
            <ToolRow><LabeledTool $gap={3}><EraserIcon />Clear<Chevron /></LabeledTool></ToolRow>
          </Stack>
          <BigButton $w={30}>
            <BigIconSlot><SortFilterIcon /></BigIconSlot>
            <BigLabel>Sort &amp;</BigLabel>
            <BigLabel>Filter<Chevron /></BigLabel>
          </BigButton>
          <BigButton $w={30}>
            <BigIconSlot><FindIcon /></BigIconSlot>
            <BigLabel>Find &amp;</BigLabel>
            <BigLabel>Select<Chevron /></BigLabel>
          </BigButton>
        </GroupBody>
        <GroupLabel>Editing</GroupLabel>
      </Group>

      <Group $w={40}>
        <GroupBody>
          <BigButton $w={40}>
            <BigIconSlot><BoltIcon /></BigIconSlot>
            <BigLabel>Ideas</BigLabel>
          </BigButton>
        </GroupBody>
        <GroupLabel>Ideas</GroupLabel>
      </Group>
    </Ribbon>
    <RibbonShadow />

    <FormulaBar>
      <NameBox>5<Chevron /></NameBox>
      <FormulaDots><DotsIcon /></FormulaDots>
      <FormulaActions>
        <span>✕</span>
        <span>✓</span>
        <FxLabel>fx</FxLabel>
      </FormulaActions>
      <FormulaInput />
    </FormulaBar>
    <FormulaGap />

    <ColumnHeaders>
      {COL_NAMES.map((name, i) => (
        <ColumnHeader key={name} $active={i === 0}>{name}</ColumnHeader>
      ))}
    </ColumnHeaders>

    <Sheet>
      {TOP_ROWS.map((row, i) => (
        <TopRow key={i} row={row} />
      ))}
      <TableHeader h={16} />
      <MonthRows month='JANUARY' />
      <Row>
        <Cell $pl={0}>AZURE GRAYOT</Cell>
        <Cell $align='center'>17</Cell>
        <Cell $align='center'>ONLINE</Cell>
        <Cell $pl={1}>1012 NW HELVETIA RD</Cell>
        <NumberCell $pl={1} $size={9}>555-555-5555</NumberCell>
        <NumberCell>8</NumberCell>
        <NumberCell $align='center'>0</NumberCell>
        <NumberCell $align='center'>4</NumberCell>
        <NumberCell $align='center'>3</NumberCell>
        <AcctRun values={['553.00', null, '137.50', '24.00', null, '439.50', null]} />
        <NumberCell $align='center'>1</NumberCell>
        <Cell />
        <NumberCell $align='center'>1</NumberCell>
        <NumberCell $align='center'>1</NumberCell>
        <NumberCell $pl={1}>$184.50</NumberCell>
      </Row>
      <Row>
        <SelectedCell />
        {blanks(8, 's')}
        <AcctRun />
        {blanks(4, 's2')}
        <ErrorCell>#DIV/0!</ErrorCell>
      </Row>
      {Array.from({ length: 18 }, (_, i) => (
        <EmptyDataRow key={i} />
      ))}
      <Row $band $h={13} />
      <TableHeader h={17} second />
      <MonthRows month='FEBRUARY' />
      <EmptyDataRow />
    </Sheet>

    <SheetTabs>
      <ScrollArrow $right $ml={18} $c='#aaa' />
      <SheetTab $w={37} $ml={28} $active>2020</SheetTab>
      <SheetTab $w={44}>BLANK</SheetTab>
      <TabDivider />
      <AddSheet><PlusCircleIcon /></AddSheet>
      <ScrollArrow $ml={634} />
      <HScrollTrack />
      <ScrollArrow $right $ml={62} />
    </SheetTabs>

    <StatusBar>
      <StatusSlot $w={6}>dy</StatusSlot>
      <StatusSlot $w={11} $ml={13}><MacroIcon /></StatusSlot>
      <StatusSlot $w={27} $ml={1084} $active><NormalViewIcon /></StatusSlot>
      <StatusSlot $w={11} $ml={9}><PageViewIcon /></StatusSlot>
      <StatusSlot $w={11} $ml={17}><BreakViewIcon /></StatusSlot>
      <StatusSlot $w={6} $ml={12}>−</StatusSlot>
      <ZoomTrack />
    </StatusBar>

    <ClickRing><CursorIcon /></ClickRing>
  </Page>
);

export default App;
